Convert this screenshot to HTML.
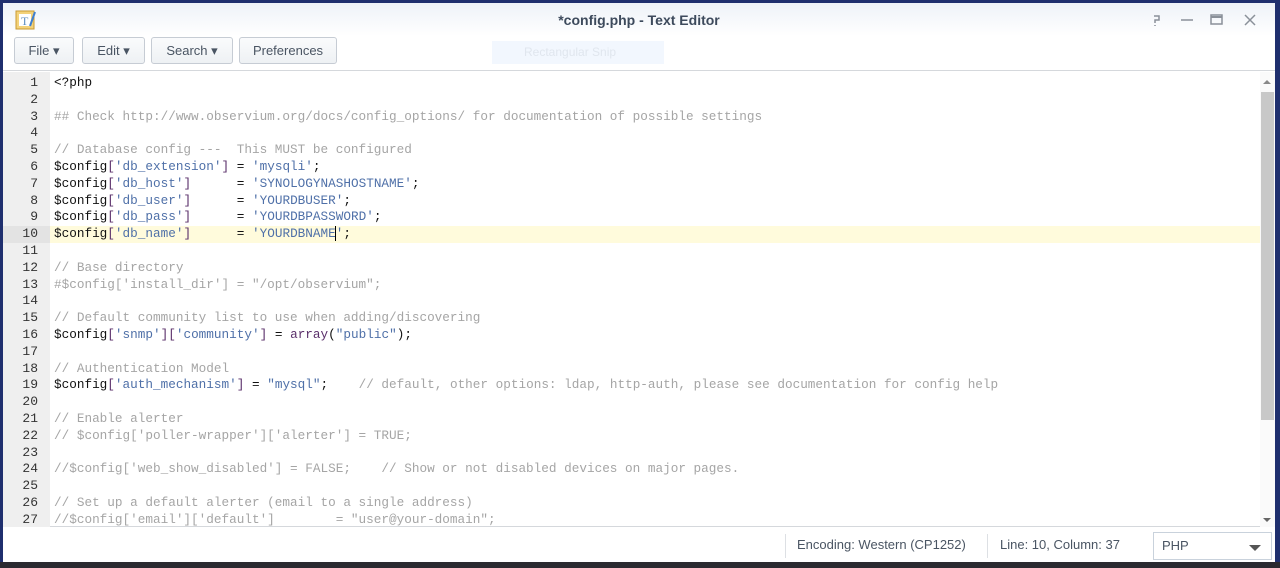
<!DOCTYPE html>
<html><head><style>
*{margin:0;padding:0;box-sizing:border-box}
body{width:1280px;height:568px;overflow:hidden;background:#1f2f6e;font-family:"Liberation Sans",sans-serif;position:relative}
.bottom{position:absolute;left:0;top:562px;width:1280px;height:6px;background:#2a2a30}
.win{position:absolute;left:3px;top:3px;width:1272px;height:559px;background:#fff;overflow:hidden}
.title{height:33px;background:linear-gradient(#eef2f8,#ffffff);position:relative}
.title .t{position:absolute;left:0;right:0;top:9px;text-align:center;font-weight:bold;font-size:14px;color:#3d4a5c}
.tb{height:35px;position:relative;border-bottom:1px solid #d5d8dc}
.btn{position:absolute;top:1px;height:27px;border:1px solid #c6ccd4;border-radius:3px;background:linear-gradient(#fafbfc,#eef1f4);font-size:13px;color:#4a5563;text-align:center;line-height:25px}
.ed{position:absolute;top:69px;left:0;width:1272px;height:455px;border-bottom:1px solid #d5d8dc}
.gut{position:absolute;left:0;top:0;width:47px;height:455px;background:#efefef}
.code{position:absolute;left:0;top:3px;width:1257px;font-family:"Liberation Mono",monospace;font-size:12.7px}
.ln{height:16.8px;line-height:16.8px;white-space:pre;position:relative;color:#111}
.ln b{display:inline-block;width:35px;text-align:right;font-weight:normal;color:#333;margin-right:16px;font-size:13px}
.hl{background:#fffbdc}
.hl b{background:#e3e3e3;width:47px;padding-right:12px;margin-right:4px}
.c{color:#a5a5a5}.s{color:#4f70a8}.p{color:#5a2f6a}
.sb{position:absolute;left:1257px;top:0;width:15px;height:455px;background:#fafafa}
.status{position:absolute;top:525px;left:0;width:1272px;height:34px;font-size:13px;color:#4a5563}
</style></head><body>
<div class="bottom"></div>
<div class="win">
<div class="title">
<svg style="position:absolute;left:12px;top:6px" width="22" height="22"><rect x="1" y="2" width="18" height="18" fill="#f3d27a" stroke="#c99a33"/><rect x="4" y="5" width="12" height="12" fill="#fff"/><text x="6" y="16" font-size="12" font-family="Liberation Serif" fill="#5f8fc2">T</text><line x1="15" y1="17" x2="20" y2="3" stroke="#3f7fd0" stroke-width="2"/></svg>
<div class="t">*config.php - Text Editor</div>
<svg style="position:absolute;left:1145px;top:10px" width="120" height="14" stroke="#8a9099" fill="none" stroke-width="1.5"><path d="M6 3h5v4h-4v3M7 12v1"/><path d="M33 7h12"/><rect x="63" y="2" width="11" height="9"/><path d="M63 4h11" stroke-width="2"/><path d="M97 2l10 10M107 2l-10 10"/></svg>
</div>
<div class="tb">
<div class="btn" style="left:11px;width:60px">File ▾</div>
<div class="btn" style="left:79px;width:63px">Edit ▾</div>
<div class="btn" style="left:148px;width:82px">Search ▾</div>
<div class="btn" style="left:236px;width:98px">Preferences</div>
<div style="position:absolute;left:489px;top:5px;width:172px;height:23px;background:#f2f7fe;color:#e0e6ee;font-size:12px;line-height:23px;padding-left:32px">Rectangular Snip</div>
</div>
<div class="ed">
<div class="gut"></div>
<div class="code">
<div class="ln"><b>1</b>&lt;?php</div>
<div class="ln"><b>2</b></div>
<div class="ln"><b>3</b><span class="c">## Check http://www.observium.org/docs/config_options/ for documentation of possible settings</span></div>
<div class="ln"><b>4</b></div>
<div class="ln"><b>5</b><span class="c">// Database config ---  This MUST be configured</span></div>
<div class="ln"><b>6</b>$config<span class="p">[</span><span class="s">'db_extension'</span><span class="p">]</span> = <span class="s">'mysqli'</span>;</div>
<div class="ln"><b>7</b>$config<span class="p">[</span><span class="s">'db_host'</span><span class="p">]</span>      = <span class="s">'SYNOLOGYNASHOSTNAME'</span>;</div>
<div class="ln"><b>8</b>$config<span class="p">[</span><span class="s">'db_user'</span><span class="p">]</span>      = <span class="s">'YOURDBUSER'</span>;</div>
<div class="ln"><b>9</b>$config<span class="p">[</span><span class="s">'db_pass'</span><span class="p">]</span>      = <span class="s">'YOURDBPASSWORD'</span>;</div>
<div class="ln hl"><b>10</b>$config<span class="p">[</span><span class="s">'db_name'</span><span class="p">]</span>      = <span class="s">'YOURDBNAME<span style="border-left:1px solid #000;margin-left:-1px"></span>'</span>;</div>
<div class="ln"><b>11</b></div>
<div class="ln"><b>12</b><span class="c">// Base directory</span></div>
<div class="ln"><b>13</b><span class="c">#$config['install_dir'] = "/opt/observium";</span></div>
<div class="ln"><b>14</b></div>
<div class="ln"><b>15</b><span class="c">// Default community list to use when adding/discovering</span></div>
<div class="ln"><b>16</b>$config<span class="p">[</span><span class="s">'snmp'</span><span class="p">][</span><span class="s">'community'</span><span class="p">]</span> = <span class="p">array</span>(<span class="s">"public"</span>);</div>
<div class="ln"><b>17</b></div>
<div class="ln"><b>18</b><span class="c">// Authentication Model</span></div>
<div class="ln"><b>19</b>$config<span class="p">[</span><span class="s">'auth_mechanism'</span><span class="p">]</span> = <span class="s">"mysql"</span>;    <span class="c">// default, other options: ldap, http-auth, please see documentation for config help</span></div>
<div class="ln"><b>20</b></div>
<div class="ln"><b>21</b><span class="c">// Enable alerter</span></div>
<div class="ln"><b>22</b><span class="c">// $config['poller-wrapper']['alerter'] = TRUE;</span></div>
<div class="ln"><b>23</b></div>
<div class="ln"><b>24</b><span class="c">//$config['web_show_disabled'] = FALSE;    // Show or not disabled devices on major pages.</span></div>
<div class="ln"><b>25</b></div>
<div class="ln"><b>26</b><span class="c">// Set up a default alerter (email to a single address)</span></div>
<div class="ln"><b>27</b><span class="c">//$config['email']['default']        = "user@your-domain";</span></div>
</div>
<div class="sb">
<div style="position:absolute;left:3px;top:8px;width:0;height:0;border-left:4px solid transparent;border-right:4px solid transparent;border-bottom:4px solid #888"></div>
<div style="position:absolute;left:1px;top:20px;width:13px;height:328px;background:#c8c8c8"></div>
<div style="position:absolute;left:3px;top:446px;width:0;height:0;border-left:4px solid transparent;border-right:4px solid transparent;border-top:4px solid #666"></div>
</div>
</div>
<div class="status">
<div style="position:absolute;left:782px;top:6px;height:24px;border-left:1px solid #dde0e4"></div>
<div style="position:absolute;left:794px;top:9px">Encoding: Western (CP1252)</div>
<div style="position:absolute;left:984px;top:6px;height:24px;border-left:1px solid #dde0e4"></div>
<div style="position:absolute;left:997px;top:9px">Line: 10, Column: 37</div>
<div style="position:absolute;left:1150px;top:4px;width:119px;height:28px;border:1px solid #c9d2dc;padding:5px 0 0 8px">PHP<span style="position:absolute;right:10px;top:12px;border-left:6px solid transparent;border-right:6px solid transparent;border-top:6px solid #555"></span></div>
</div>
</div>
</body></html>
